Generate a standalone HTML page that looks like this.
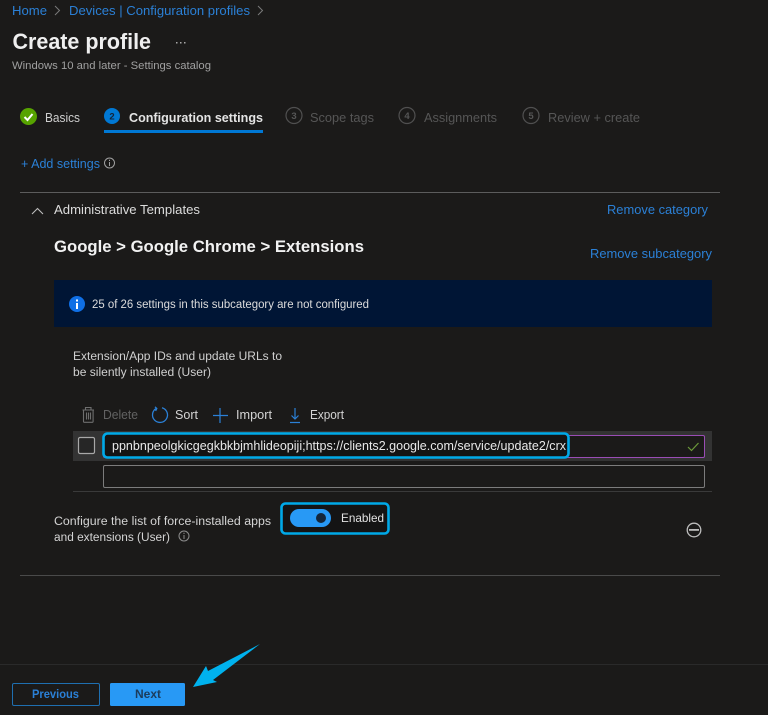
<!DOCTYPE html>
<html lang="en">
<head>
<meta charset="utf-8">
<title>Create profile</title>
<style>
html,body{margin:0;padding:0;background:#1b1a19;width:768px;height:715px;overflow:hidden}
svg{display:block;font-family:"Liberation Sans",sans-serif;filter:blur(0.3px)}
.l{fill:#2b80d6}
.d{fill:#565656}
.t{fill:#dcdcdc}
</style>
</head>
<body>
<svg width="768" height="715" viewBox="0 0 768 715" xmlns="http://www.w3.org/2000/svg">
<rect width="768" height="715" fill="#1b1a19"/>

<!-- breadcrumb -->
<text class="l" x="12" y="15" font-size="13" textLength="35" lengthAdjust="spacingAndGlyphs">Home</text>
<path d="M55 6l4.500 4.500L55 15" fill="none" stroke="#7a7a7a"/>
<text class="l" x="69" y="15" font-size="13" textLength="181" lengthAdjust="spacingAndGlyphs">Devices | Configuration profiles</text>
<path d="M258 6l4.500 4.500L258 15" fill="none" stroke="#7a7a7a"/>

<!-- title -->
<text x="12.500" y="49" font-size="22" font-weight="700" fill="#efefef" textLength="138.500" lengthAdjust="spacingAndGlyphs">Create profile</text>
<g fill="#a8a8a8"><rect x="176" y="42" width="1.500" height="1.500"/><rect x="180" y="42" width="1.500" height="1.500"/><rect x="184" y="42" width="1.500" height="1.500"/></g>
<text x="12" y="69" font-size="11" fill="#a0a0a0" textLength="199" lengthAdjust="spacingAndGlyphs">Windows 10 and later - Settings catalog</text>

<!-- tabs -->
<circle cx="28.500" cy="116.500" r="8.500" fill="#57a300"/>
<path d="M24.500 117l3 3 5-6" fill="none" stroke="#fff" stroke-width="2"/>
<text x="45" y="122" font-size="13" fill="#cfcfcf" textLength="35" lengthAdjust="spacingAndGlyphs">Basics</text>

<circle cx="112" cy="116" r="8" fill="#0078d4"/>
<text x="112" y="119.500" font-size="9.500" font-weight="700" fill="#12243a" text-anchor="middle">2</text>
<text x="129" y="122" font-size="13" font-weight="700" fill="#e4e4e4" textLength="134" lengthAdjust="spacingAndGlyphs">Configuration settings</text>
<rect x="104" y="130" width="159" height="3" fill="#0078d4"/>

<circle cx="294" cy="115.500" r="8" fill="none" stroke="#505050" stroke-width="1.200"/>
<text x="294" y="119" font-size="9.500" font-weight="700" fill="#565656" text-anchor="middle">3</text>
<text class="d" x="310" y="122" font-size="13" textLength="64" lengthAdjust="spacingAndGlyphs">Scope tags</text>

<circle cx="407" cy="115.500" r="8" fill="none" stroke="#505050" stroke-width="1.200"/>
<text x="407" y="119" font-size="9.500" font-weight="700" fill="#565656" text-anchor="middle">4</text>
<text class="d" x="424" y="122" font-size="13" textLength="73" lengthAdjust="spacingAndGlyphs">Assignments</text>

<circle cx="531" cy="115.500" r="8" fill="none" stroke="#505050" stroke-width="1.200"/>
<text x="531" y="119" font-size="9.500" font-weight="700" fill="#565656" text-anchor="middle">5</text>
<text class="d" x="548" y="122" font-size="13" textLength="92" lengthAdjust="spacingAndGlyphs">Review + create</text>

<!-- add settings -->
<text class="l" x="21" y="168" font-size="12.500" textLength="79" lengthAdjust="spacingAndGlyphs">+ Add settings</text>
<circle cx="109.500" cy="163" r="5" fill="none" stroke="#a0a0a0"/>
<path d="M109.500 162v4M109.500 159.800v1.200" stroke="#a0a0a0"/>

<rect x="20" y="192" width="700" height="1" fill="#5c5c5c"/>

<!-- category -->
<path d="M32 214l5.500-5.500 5.500 5.500" fill="none" stroke="#bdbdbd" stroke-width="1.100"/>
<text class="t" x="54" y="214" font-size="12.500" textLength="146" lengthAdjust="spacingAndGlyphs">Administrative Templates</text>
<text class="l" x="607" y="214" font-size="12.500" textLength="101" lengthAdjust="spacingAndGlyphs">Remove category</text>
<text x="54" y="252" font-size="16.500" font-weight="700" fill="#f2f2f2" textLength="310" lengthAdjust="spacingAndGlyphs">Google &gt; Google Chrome &gt; Extensions</text>
<text class="l" x="590" y="258" font-size="12.500" textLength="122" lengthAdjust="spacingAndGlyphs">Remove subcategory</text>

<!-- banner -->
<rect x="54" y="280" width="658" height="47" fill="#001535"/>
<circle cx="77" cy="304" r="8" fill="#0f6fe6"/>
<rect x="76" y="303" width="2" height="6" fill="#fff"/><rect x="76" y="299.500" width="2" height="2" fill="#fff"/>
<text x="92" y="308" font-size="11.500" fill="#dcdcdc" textLength="277" lengthAdjust="spacingAndGlyphs">25 of 26 settings in this subcategory are not configured</text>

<!-- setting label -->
<text x="73" y="360" font-size="11.500" fill="#d0d0d0" textLength="209" lengthAdjust="spacingAndGlyphs">Extension/App IDs and update URLs to</text>
<text x="73" y="376" font-size="11.500" fill="#d0d0d0" textLength="138" lengthAdjust="spacingAndGlyphs">be silently installed (User)</text>

<!-- toolbar -->
<path d="M82.500 410h11.500M85.500 410v-2.500h5.500v2.500M83.500 410v11.500a.8.8 0 0 0 .8.8h8a.8.8 0 0 0 .8-.8V410M86.500 412.500v7M88.500 412.500v7M90.500 412.500v7" fill="none" stroke="#6e6e6e" stroke-width="1.100"/>
<text x="103" y="419" font-size="12.500" fill="#626262" textLength="35" lengthAdjust="spacingAndGlyphs">Delete</text>
<path d="M156.500 408.300A7.500 7.500 0 1 0 162 407.700M155 406.800l1.800 1.700-1.200 2.400" fill="none" stroke="#2b80d6" stroke-width="1.300"/>
<text x="175" y="419" font-size="12.500" fill="#d4d4d4" textLength="23" lengthAdjust="spacingAndGlyphs">Sort</text>
<path d="M220 408v15M213 415.500h15" fill="none" stroke="#2b80d6" stroke-width="1.200"/>
<text x="236" y="419" font-size="12.500" fill="#d4d4d4" textLength="36" lengthAdjust="spacingAndGlyphs">Import</text>
<path d="M295 408v11M291.500 415.500l3.500 3.500 3.500-3.500M290 422.500h10" fill="none" stroke="#2b80d6" stroke-width="1.200"/>
<text x="310" y="419" font-size="12.500" fill="#d4d4d4" textLength="34" lengthAdjust="spacingAndGlyphs">Export</text>

<!-- row 1 -->
<rect x="73" y="431" width="639" height="30" fill="#333333"/>
<rect x="78.500" y="437.500" width="16" height="16" rx="1.500" fill="#262626" stroke="#a8a8a8" stroke-width="1.200"/>
<rect x="103.500" y="435.500" width="601" height="22" rx="1.500" fill="#1b1a19" stroke="#9a4db5" stroke-width="1"/>
<rect x="103.500" y="433.500" width="465" height="24" rx="4" fill="#141414" stroke="#00a9e8" stroke-width="2.600"/>
<text x="112" y="450" font-size="12.500" fill="#e8e8e8" textLength="454" lengthAdjust="spacingAndGlyphs">ppnbnpeolgkicgegkbkbjmhlideopiji;https://clients2.google.com/service/update2/crx</text>
<path d="M688 447l3.500 3.500 7-7.500" fill="none" stroke="#6b9a3a" stroke-width="1.200"/>

<!-- row 2 -->
<rect x="103.500" y="465.500" width="601" height="22" rx="1.500" fill="#1b1a19" stroke="#7c7c7c"/>
<rect x="73" y="491" width="639" height="1" fill="#3a3a3a"/>

<!-- configure -->
<text x="54" y="525" font-size="11.500" fill="#d4d4d4" textLength="217" lengthAdjust="spacingAndGlyphs">Configure the list of force-installed apps</text>
<text x="54" y="541" font-size="11.500" fill="#d4d4d4" textLength="116" lengthAdjust="spacingAndGlyphs">and extensions (User)</text>
<circle cx="184" cy="536" r="5" fill="none" stroke="#8c8c8c"/>
<path d="M184 535v4M184 532.800v1.200" stroke="#8c8c8c"/>

<rect x="281.500" y="503.500" width="107" height="30" rx="4" fill="#141414" stroke="#00a9e8" stroke-width="2.600"/>
<rect x="290" y="509" width="41" height="18" rx="9" fill="#2899f5"/>
<circle cx="321" cy="518" r="5" fill="#14263a"/>
<text x="341" y="522" font-size="12" fill="#e2e2e2" textLength="43" lengthAdjust="spacingAndGlyphs">Enabled</text>

<circle cx="694" cy="530" r="6.800" fill="none" stroke="#bcbcbc" stroke-width="1.300"/>
<rect x="689" y="529" width="10" height="1.800" fill="#bcbcbc"/>

<rect x="20" y="575" width="700" height="1" fill="#4a4a4a"/>

<!-- footer -->
<rect x="0" y="664" width="768" height="1" fill="#2a2a2a"/>
<rect x="12.500" y="683.500" width="87" height="22" rx="1.500" fill="none" stroke="#1f6fb0"/>
<text x="32" y="698" font-size="12" font-weight="700" fill="#2b80d6" textLength="47" lengthAdjust="spacingAndGlyphs">Previous</text>
<rect x="110" y="683" width="75" height="23" rx="1.500" fill="#2899f5"/>
<text x="135" y="698" font-size="12" font-weight="700" fill="#1c3c5c" textLength="26" lengthAdjust="spacingAndGlyphs">Next</text>

<!-- arrow -->
<polygon points="193,687 206,666 208,671 260,644 213,680 217,682" fill="#00b2ee"/>
</svg>
</body>
</html>
